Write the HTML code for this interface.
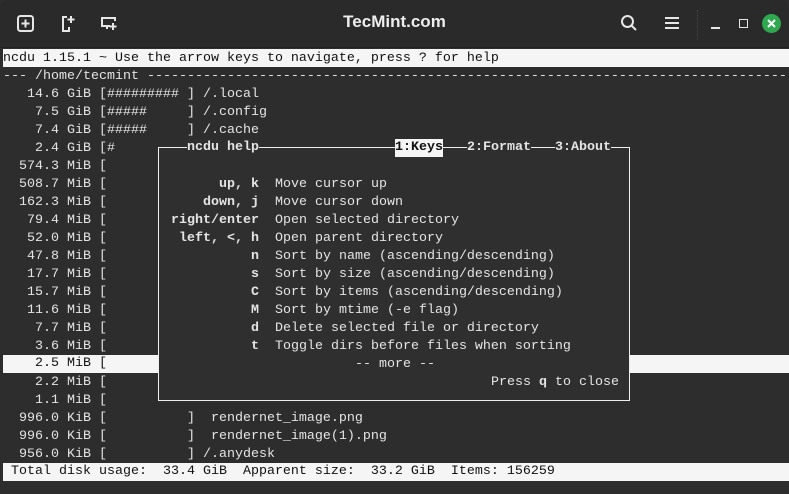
<!DOCTYPE html>
<html><head><meta charset="utf-8"><style>
html,body{margin:0;padding:0;width:789px;height:494px;overflow:hidden;background:#2d2d2d}
#tb{position:absolute;left:0;top:0;width:789px;height:47px;background:#2a2a2a;border-radius:8px 8px 0 0;border-bottom:1px solid #222}
#title{position:absolute;left:0;width:789px;top:12px;text-align:center;color:#eee;font:bold 17px "Liberation Sans",sans-serif}
.r{position:absolute;left:3px;height:18px;line-height:18px;white-space:pre;font-family:"Liberation Mono",monospace;font-size:13.33px;color:#e4e4e4}
.w{background:#f5f5f5;color:#111;width:786px}
#box{position:absolute;left:158px;top:147px;width:470px;height:252px;border:1px solid #eee;background:#2f2f2f}
.b{font-weight:bold}
.t{background:#2f2f2f}
.sel{background:#f5f5f5;color:#111}
</style></head><body>
<div id="tb">
<svg style="position:absolute;left:17px;top:15px" width="17" height="17" viewBox="0 0 17 17"><rect x="1" y="1" width="15" height="15" rx="2.5" fill="none" stroke="#e6e6e6" stroke-width="2"/><path d="M8.5 4.5v8M4.5 8.5h8" stroke="#e6e6e6" stroke-width="2"/></svg>
<svg style="position:absolute;left:61px;top:15px" width="14" height="17" viewBox="0 0 14 17"><path d="M6 2H2v14h6v-4" fill="none" stroke="#e6e6e6" stroke-width="2"/><path d="M10 1v7M6.5 4.5h7" stroke="#e6e6e6" stroke-width="2"/></svg>
<svg style="position:absolute;left:101px;top:17px" width="17" height="14" viewBox="0 0 17 14"><path d="M9 9H1V1h13v3" fill="none" stroke="#e6e6e6" stroke-width="2"/><path d="M6 9v3M12 6v7M8.5 9.5h7" stroke="#e6e6e6" stroke-width="2"/></svg>
<div id="title">TecMint.com</div>
<svg style="position:absolute;left:620px;top:14px" width="18" height="18" viewBox="0 0 18 18"><circle cx="7.5" cy="7.5" r="5.5" fill="none" stroke="#e6e6e6" stroke-width="2"/><path d="M11.5 11.5l4.5 4.5" stroke="#e6e6e6" stroke-width="2"/></svg>
<svg style="position:absolute;left:665px;top:16px" width="14" height="14" viewBox="0 0 14 14"><path d="M0 2h14M0 7h14M0 12h14" stroke="#e6e6e6" stroke-width="2"/></svg>
<div style="position:absolute;left:697px;top:10px;width:1px;height:30px;border-left:1px dotted #444"></div>
<div style="position:absolute;left:711px;top:27px;width:9px;height:2px;background:#e6e6e6"></div>
<div style="position:absolute;left:739px;top:19px;width:7px;height:7px;border:1.5px solid #e6e6e6"></div>
<div style="position:absolute;left:762px;top:14px;width:19px;height:19px;border-radius:50%;background:#2fa84f"></div>
<svg style="position:absolute;left:767px;top:19px" width="9" height="9" viewBox="0 0 9 9"><path d="M1 1l7 7M8 1L1 8" stroke="#fff" stroke-width="2"/></svg>
</div>

<div class="r w" style="top:49px;line-height:20px">ncdu 1.15.1 ~ Use the arrow keys to navigate, press ? for help</div>
<div class="r" style="top:68px">--- /home/tecmint ---------------------------------------------------------------------------------</div>
<div class="r" style="top:86px">   14.6 GiB [######### ] /.local</div>
<div class="r" style="top:104px">    7.5 GiB [#####     ] /.config</div>
<div class="r" style="top:122px">    7.4 GiB [#####     ] /.cache</div>
<div class="r" style="top:140px">    2.4 GiB [#</div>
<div class="r" style="top:158px">  574.3 MiB [</div>
<div class="r" style="top:176px">  508.7 MiB [</div>
<div class="r" style="top:194px">  162.3 MiB [</div>
<div class="r" style="top:212px">   79.4 MiB [</div>
<div class="r" style="top:230px">   52.0 MiB [</div>
<div class="r" style="top:248px">   47.8 MiB [</div>
<div class="r" style="top:266px">   17.7 MiB [</div>
<div class="r" style="top:284px">   15.7 MiB [</div>
<div class="r" style="top:302px">   11.6 MiB [</div>
<div class="r" style="top:320px">    7.7 MiB [</div>
<div class="r" style="top:338px">    3.6 MiB [</div>
<div class="r w" style="top:355px">    2.5 MiB [</div>
<div class="r" style="top:374px">    2.2 MiB [</div>
<div class="r" style="top:392px">    1.1 MiB [</div>
<div class="r" style="top:410px">  996.0 KiB [          ]  rendernet_image.png</div>
<div class="r" style="top:428px">  996.0 KiB [          ]  rendernet_image(1).png</div>
<div class="r" style="top:446px">  956.0 KiB [          ] /.anydesk</div>
<div class="r w" style="top:463px"> Total disk usage:  33.4 GiB  Apparent size:  33.2 GiB  Items: 156259</div>

<div id="box"></div>
<div class="r b t" style="top:139px;left:187px">ncdu help</div>
<div class="r b sel" style="top:139px;left:395px">1:Keys</div>
<div class="r b t" style="top:139px;left:467px">2:Format</div>
<div class="r b t" style="top:139px;left:555px">3:About</div>
<div class="r" style="top:176px;left:155px"><span class="b">        up, k</span>  Move cursor up</div>
<div class="r" style="top:194px;left:155px"><span class="b">      down, j</span>  Move cursor down</div>
<div class="r" style="top:212px;left:155px"><span class="b">  right/enter</span>  Open selected directory</div>
<div class="r" style="top:230px;left:155px"><span class="b">   left, &lt;, h</span>  Open parent directory</div>
<div class="r" style="top:248px;left:155px"><span class="b">            n</span>  Sort by name (ascending/descending)</div>
<div class="r" style="top:266px;left:155px"><span class="b">            s</span>  Sort by size (ascending/descending)</div>
<div class="r" style="top:284px;left:155px"><span class="b">            C</span>  Sort by items (ascending/descending)</div>
<div class="r" style="top:302px;left:155px"><span class="b">            M</span>  Sort by mtime (-e flag)</div>
<div class="r" style="top:320px;left:155px"><span class="b">            d</span>  Delete selected file or directory</div>
<div class="r" style="top:338px;left:155px"><span class="b">            t</span>  Toggle dirs before files when sorting</div>
<div class="r" style="top:356px;left:355px">-- more --</div>
<div class="r" style="top:374px;left:491px">Press <span class="b">q</span> to close</div>
</body></html>
